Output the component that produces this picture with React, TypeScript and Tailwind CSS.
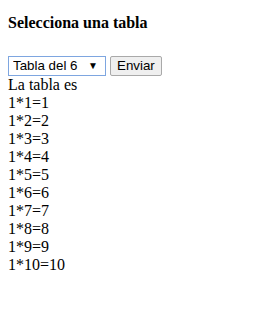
import { useState } from "react";

const tablas = [1, 2, 3, 4, 5, 6, 7, 8, 9, 10];

export default function App() {
  const [tabla, setTabla] = useState(6);

  return (
    <main className="min-h-[319px] bg-white px-2 pt-[14px] text-black font-['Liberation_Serif',serif] text-base leading-[18px]">
      <h4 className="font-bold leading-[18px]">Selecciona una tabla</h4>

      {/* Form */}
      <div className="mt-[24px] flex items-center gap-[4px] font-['Liberation_Sans',Arial,sans-serif] text-[13.33px]">
        <label className="flex h-[20px] w-[98px] items-center border border-[#7ea6e0] bg-white pl-[4px] pr-[7px]">
          <select
            value={tabla}
            onChange={(e) => setTabla(Number(e.target.value))}
            className="flex-1 appearance-none bg-transparent outline-none leading-[16px]"
          >
            {tablas.map((n) => (
              <option key={n} value={n}>
                Tabla del {n}
              </option>
            ))}
          </select>
          <span className="text-[10px] leading-none">▼</span>
        </label>
        <button className="h-[20px] rounded-[2px] border border-[#a9a9a9] bg-[#efefef] px-[6px] leading-[16px]">
          Enviar
        </button>
      </div>

      {/* Result */}
      <div className="leading-[18px]">
        <div>La tabla es</div>
        {tablas.map((n) => (
          <div key={n}>
            1*{n}={n}
          </div>
        ))}
      </div>
    </main>
  );
}
